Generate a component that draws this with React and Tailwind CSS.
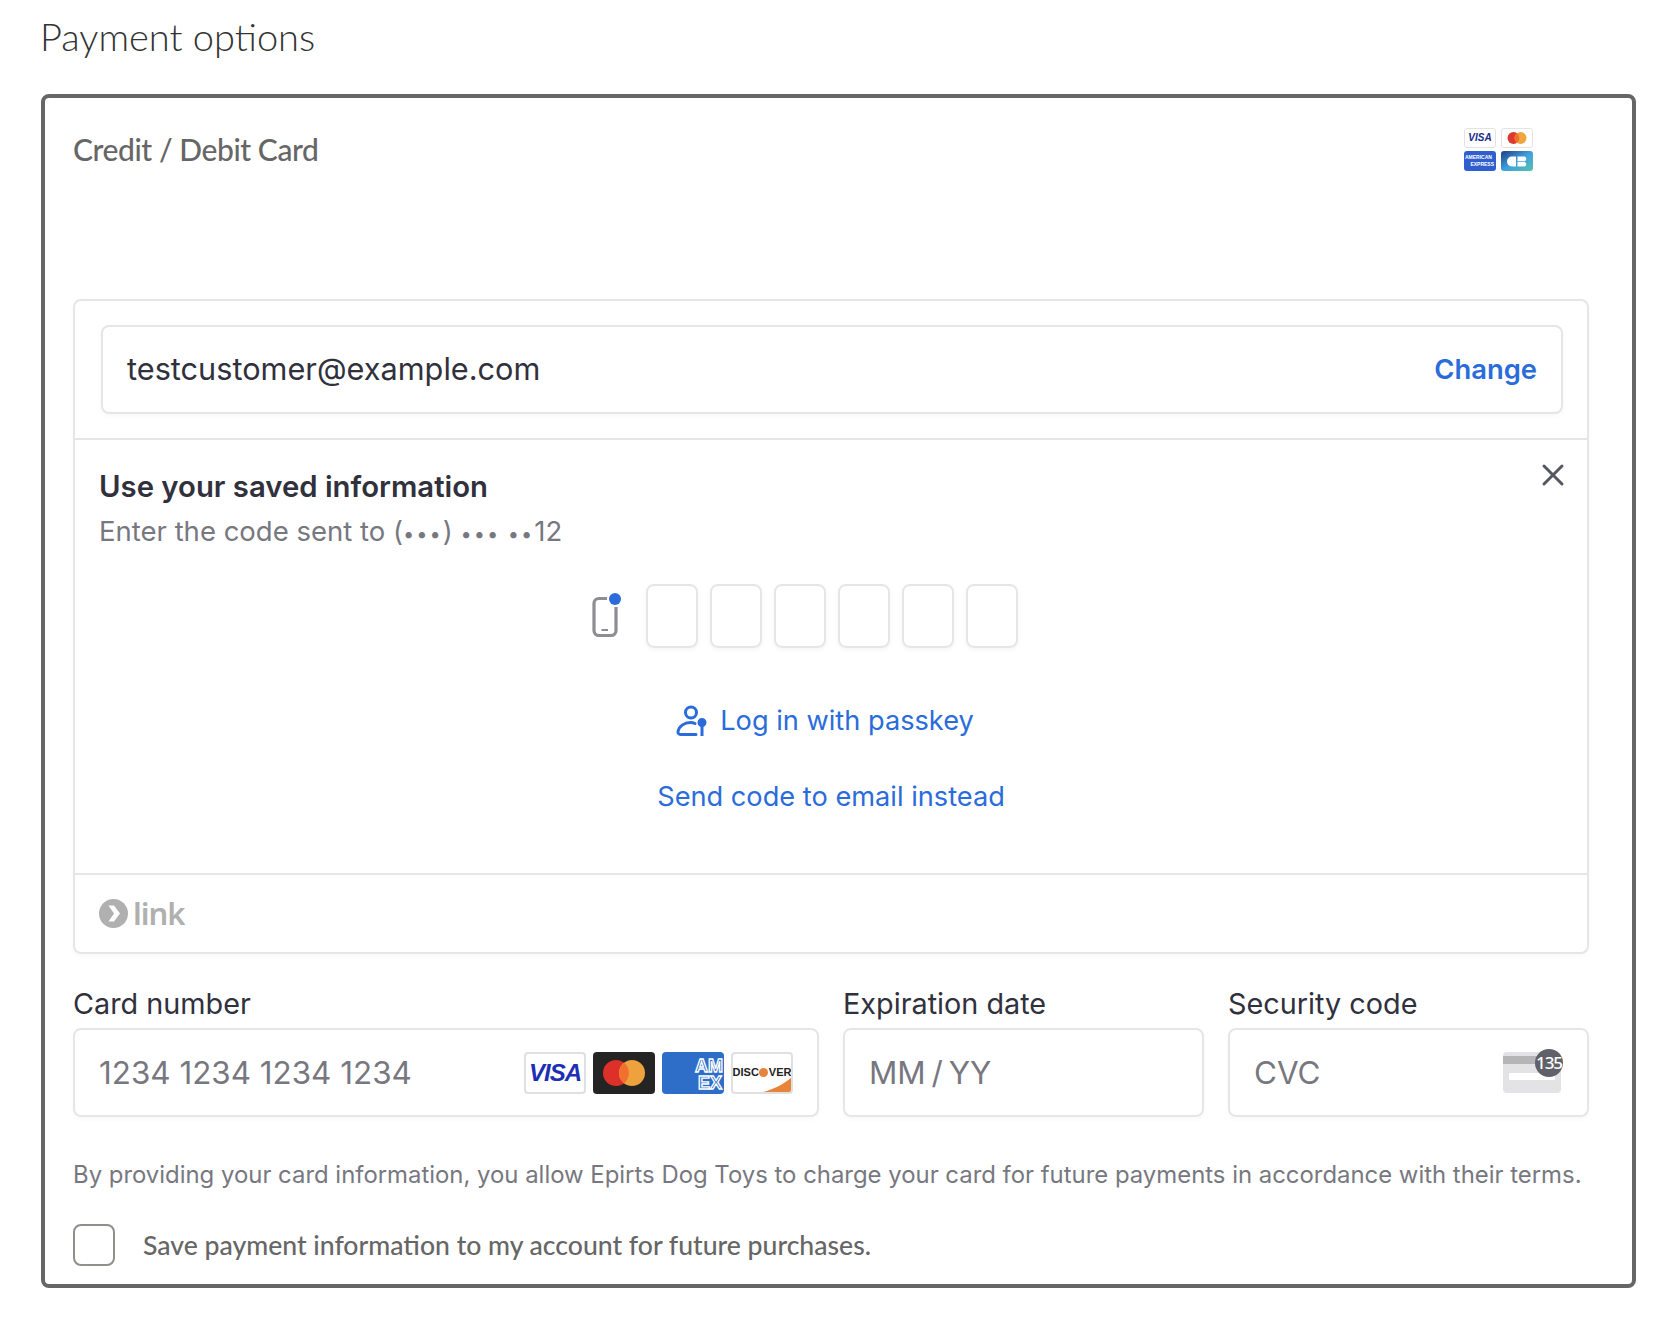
import React from 'react';
import { X } from 'lucide-react';

const VisaMini = () => (
  <span className="flex h-[20px] w-[32px] items-center justify-center rounded-[3px] border border-[#e3e3e3] bg-white">
    <span className="font-['Liberation_Sans',sans-serif] text-[10px] font-bold italic leading-none text-[#1a2a8c]">VISA</span>
  </span>
);

const McMini = () => (
  <span className="flex h-[20px] w-[32px] items-center justify-center rounded-[3px] border border-[#e3e3e3] bg-white">
    <svg width="22" height="14" viewBox="0 0 22 14">
      <circle cx="7.5" cy="7" r="6" fill="#dd3a2f" />
      <circle cx="14.5" cy="7" r="6" fill="#f0a63e" />
      <path d="M11 2.2a6 6 0 0 1 0 9.6a6 6 0 0 1 0-9.6z" fill="#f06f2e" />
    </svg>
  </span>
);

const AmexMini = () => (
  <span className="flex h-[20px] w-[32px] flex-col justify-center overflow-hidden rounded-[3px] bg-[#2f5fcf] font-['Liberation_Sans',sans-serif] text-[5px] font-bold leading-[7px] text-white">
    <span className="pl-[1px]">AMERICAN</span>
    <span className="pr-[2px] text-right">EXPRESS</span>
  </span>
);

const CbMini = () => (
  <span className="flex h-[20px] w-[32px] items-center justify-center rounded-[3px] bg-gradient-to-br from-[#1f3f7f] via-[#3f9fe0] to-[#59c2a6]">
    <svg width="20" height="11" viewBox="0 0 20 11">
      <path d="M9 0.5H5a5 5 0 0 0 0 10h4z" fill="#fff" />
      <path d="M10.500 0.500h7a2.500 2.500 0 0 1 0 4.800h-7zM10.500 6h7a2.300 2.300 0 0 1 0 4.500h-7z" fill="#fff" />
    </svg>
  </span>
);

const VisaBadge = () => (
  <span className="flex h-[42px] w-[62px] items-center justify-center rounded-[4px] border-2 border-[#e0e0e0] bg-white">
    <span className="font-['Liberation_Sans',sans-serif] text-[24px] font-bold italic leading-none tracking-[-1px] text-[#1c2fb5]">VISA</span>
  </span>
);

const McBadge = () => (
  <span className="flex h-[42px] w-[62px] items-center justify-center rounded-[4px] bg-[#242424]">
    <svg width="44" height="28" viewBox="0 0 44 28">
      <circle cx="14" cy="14" r="13" fill="#dc3029" />
      <circle cx="30" cy="14" r="13" fill="#eda23e" />
      <path d="M22 3.800a13 13 0 0 1 0 20.400a13 13 0 0 1 0-20.400z" fill="#f2702f" />
    </svg>
  </span>
);

const AmexBadge = () => (
  <span className="relative flex h-[42px] w-[62px] overflow-hidden rounded-[4px] bg-[#2f6ec8]">
    <svg width="62" height="42" viewBox="0 0 62 42" className="absolute inset-0">
      <text x="33" y="20" fontFamily="Liberation Sans, sans-serif" fontSize="18" fontWeight="700" fill="#2f6ec8" stroke="#fff" strokeWidth="1.300">AM</text>
      <text x="36" y="37" fontFamily="Liberation Sans, sans-serif" fontSize="18" fontWeight="700" fill="#2f6ec8" stroke="#fff" strokeWidth="1.300">EX</text>
    </svg>
  </span>
);

const DiscoverBadge = () => (
  <span className="relative flex h-[42px] w-[62px] items-center justify-center overflow-hidden rounded-[4px] border-2 border-[#e0e0e0] bg-white">
    <svg width="58" height="38" viewBox="0 0 58 38" className="absolute inset-0">
      <path d="M58 24 C48 32 38 36 30 38 L58 38 Z" fill="#e8833a" />
    </svg>
    <span className="relative flex items-center font-['Liberation_Sans',sans-serif] text-[11px] font-bold leading-none text-[#222]">
      DISC<span className="mx-[0.5px] inline-block h-[9px] w-[9px] rounded-full bg-[#e8833a]" />VER
    </span>
  </span>
);

const PhoneIcon = () => (
  <span className="relative block h-[46px] w-[32px]">
    <svg width="32" height="46" viewBox="0 0 32 46" fill="none">
      <path d="M15 5.500H7a5 5 0 0 0-5 5V37.500a5 5 0 0 0 5 5h12a5 5 0 0 0 5-5V14" stroke="#8d8d92" strokeWidth="3.200" />
      <path d="M9.500 37h6.500" stroke="#8d8d92" strokeWidth="2" />
    </svg>
    <span className="absolute left-[17px] top-[0px] h-[12px] w-[12px] rounded-full bg-[#2b6cdb]" />
  </span>
);

const PasskeyIcon = () => (
  <svg width="32" height="32" viewBox="0 0 32 32" fill="none" stroke="#2b6cdb" strokeWidth="3">
    <circle cx="15" cy="7.500" r="5.500" />
    <path d="M20 29.500H4.500a2.500 2.500 0 0 1-2.500-3c1-5 6-9 12.500-9c1.500 0 3 .3 4.500 1" strokeLinecap="round" />
    <circle cx="26" cy="17.500" r="3.500" fill="#2b6cdb" strokeWidth="2" />
    <path d="M26 20v11" />
  </svg>
);

const LinkLogo = () => (
  <div className="flex items-center gap-[5px]">
    <svg width="29" height="29" viewBox="0 0 29 29">
      <circle cx="14.500" cy="14.500" r="14.500" fill="#b0b0b0" />
      <path d="M9.500 6.500h5.500l6 8l-6 8H9.500l5.500-8z" fill="#fff" />
    </svg>
    <span className="font-['Noto_Sans',sans-serif] text-[31px] font-semibold leading-none tracking-[-1px] text-[#b0b0b0]">link</span>
  </div>
);

const CvcIcon = () => (
  <span className="relative mr-[2px] block h-[41px] w-[58px]">
    <span className="absolute bottom-0 left-0 flex h-[41px] w-[58px] flex-col rounded-[4px] bg-[#e3e3e5]">
      <span className="mt-[4px] h-[8px] w-full bg-[#b5b5b8]" />
      <span className="ml-[6px] mt-[9px] h-[7px] w-[46px] rounded-[1px] bg-white" />
    </span>
    <span className="absolute right-[-2px] top-[-3px] flex h-[28px] w-[28px] items-center justify-center rounded-full bg-[#5f6068] font-['Noto_Sans',sans-serif] text-[17px] font-medium tracking-[-1px] text-white">135</span>
  </span>
);

const Field = ({ label, placeholder, className, placeholderClass = '', children }) => (
  <div className={className}>
    <div className="mb-[4px] text-[28.800px] leading-[40px] text-[#30313d]">{label}</div>
    <div className="flex h-[89px] items-center justify-between rounded-[8px] border-2 border-[#e6e6e6] px-[24px] shadow-[0_2px_5px_rgba(0,0,0,0.03)]">
      <span className={`pt-[2px] text-[31.400px] text-[#77787f] ${placeholderClass}`}>{placeholder}</span>
      {children}
    </div>
  </div>
);

export default function App() {
  return (
    <div className="h-[1320px] w-[1672px] bg-white pl-[41px] pt-[11px] font-['Inter',sans-serif]">
      <h1 className="-ml-[1px] mb-[33px] font-['Lato',sans-serif] text-[38px] font-light leading-[50px] text-[#333]">Payment options</h1>
      <div className="h-[1194px] w-[1595px] rounded-[8px] border-[4px] border-[#666] pl-[28px] pr-[43px]">
        <div className="flex h-[201px] items-start justify-between pt-[29px]">
          <div className="font-['Lato',sans-serif] text-[30px] font-medium leading-[44px] tracking-[-0.420px] text-[#666]">Credit / Debit Card</div>
          <div className="mr-[56px] mt-[1px] grid grid-cols-2 gap-x-[5px] gap-y-[3px]">
            <VisaMini />
            <McMini />
            <AmexMini />
            <CbMini />
          </div>
        </div>

        <div className="rounded-[8px] border-2 border-[#e6e6e6] shadow-[0_2px_5px_rgba(0,0,0,0.03)]">
          <div className="border-b-2 border-[#e6e6e6] pb-[24px] pl-[26px] pr-[24px] pt-[24px]">
            <div className="flex h-[89px] items-center justify-between rounded-[8px] border-2 border-[#e6e6e6] px-[24px] shadow-[0_2px_5px_rgba(0,0,0,0.03)]">
              <span className="text-[30.700px] text-[#30313d]">testcustomer@example.com</span>
              <span className="text-[27.400px] font-semibold text-[#2b6cdb]">Change</span>
            </div>
          </div>

          <div className="relative h-[435px] border-b-2 border-[#e6e6e6] px-[24px] pt-[24px]">
            <X className="absolute right-[16px] top-[17px] text-[#55565f]" size={36} strokeWidth={2} />
            <div className="text-[29.300px] font-semibold leading-[45px] text-[#30313d]">Use your saved information</div>
            <div className="text-[27.500px] leading-[44px] text-[#77787f]">
              Enter the code sent to (<span className="text-[20px] tracking-[2px]">•••</span>) <span className="text-[20px] tracking-[2px]">••• ••</span>12
            </div>
            <div className="mt-[28px] flex items-center justify-center gap-[12px] pr-[53px]">
              <div className="mr-[10px]"><PhoneIcon /></div>
              {[0, 1, 2, 3, 4, 5].map((i) => (
                <div key={i} className="h-[64px] w-[52px] rounded-[8px] border-2 border-[#e6e6e6] shadow-[0_2px_5px_rgba(0,0,0,0.04)]" />
              ))}
            </div>
            <div className="mt-[53px] flex items-center justify-center gap-[12px] pr-[12px] text-[27.200px] leading-[40px] text-[#2b6cdb]">
              <PasskeyIcon />
              Log in with passkey
            </div>
            <div className="mt-[36px] text-center text-[27.200px] leading-[40px] text-[#2b6cdb]">Send code to email instead</div>
          </div>

          <div className="flex h-[77px] items-center px-[24px]">
            <LinkLogo />
          </div>
        </div>

        <div className="mt-[30px] flex gap-[24px]">
          <Field label="Card number" placeholder="1234 1234 1234 1234" className="w-[746px]">
            <div className="flex gap-[7px]">
              <VisaBadge />
              <McBadge />
              <AmexBadge />
              <DiscoverBadge />
            </div>
          </Field>
          <Field label="Expiration date" placeholder="MM / YY" placeholderClass="[word-spacing:-3px]" className="w-[361px]" />
          <Field label="Security code" placeholder="CVC" className="w-[361px]">
            <CvcIcon />
          </Field>
        </div>

        <p className="mt-[38px] whitespace-nowrap text-[23.900px] leading-[40px] text-[#77787f]">
          By providing your card information, you allow Epirts Dog Toys to charge your card for future payments in accordance with their terms.
        </p>

        <label className="mt-[29px] flex items-center gap-[28px]">
          <span className="h-[42px] w-[42px] rounded-[8px] border-2 border-[#8f8f8c]" />
          <span className="pt-[2px] font-['Lato',sans-serif] text-[26.600px] font-medium text-[#666]">Save payment information to my account for future purchases.</span>
        </label>
      </div>
    </div>
  );
}
